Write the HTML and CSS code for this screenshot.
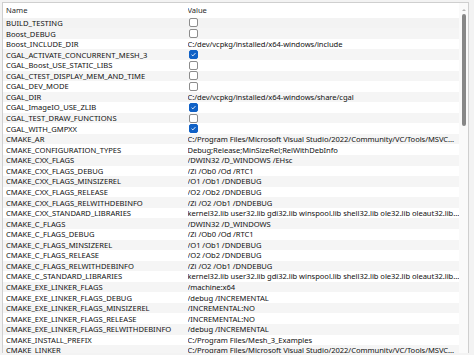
FILE: index.html
```html
<!DOCTYPE html>
<html>
<head>
<meta charset="utf-8">
<link rel="stylesheet" href="styles.css">
</head>
<body>
<div class="frame">
  <div class="table">
    <div class="head">
      <div class="c-name">Name</div>
      <div class="c-val">Value</div>
    </div>
    <div class="row hl"><div class="c-name">BUILD_TESTING</div><div class="c-val"><span class="cb"></span></div></div>
    <div class="row"><div class="c-name">Boost_DEBUG</div><div class="c-val"><span class="cb"></span></div></div>
    <div class="row"><div class="c-name">Boost_INCLUDE_DIR</div><div class="c-val">C:/dev/vcpkg/installed/x64-windows/include</div></div>
    <div class="row"><div class="c-name">CGAL_ACTIVATE_CONCURRENT_MESH_3</div><div class="c-val"><span class="cb on"><svg viewBox="0 0 8 8"><path d="M1.8 4.2 L3.3 5.6 L6.2 2.4"/></svg></span></div></div>
    <div class="row"><div class="c-name">CGAL_Boost_USE_STATIC_LIBS</div><div class="c-val"><span class="cb"></span></div></div>
    <div class="row"><div class="c-name">CGAL_CTEST_DISPLAY_MEM_AND_TIME</div><div class="c-val"><span class="cb"></span></div></div>
    <div class="row"><div class="c-name">CGAL_DEV_MODE</div><div class="c-val"><span class="cb"></span></div></div>
    <div class="row"><div class="c-name">CGAL_DIR</div><div class="c-val">C:/dev/vcpkg/installed/x64-windows/share/cgal</div></div>
    <div class="row"><div class="c-name">CGAL_ImageIO_USE_ZLIB</div><div class="c-val"><span class="cb on"><svg viewBox="0 0 8 8"><path d="M1.8 4.2 L3.3 5.6 L6.2 2.4"/></svg></span></div></div>
    <div class="row"><div class="c-name">CGAL_TEST_DRAW_FUNCTIONS</div><div class="c-val"><span class="cb"></span></div></div>
    <div class="row"><div class="c-name">CGAL_WITH_GMPXX</div><div class="c-val"><span class="cb on"><svg viewBox="0 0 8 8"><path d="M1.8 4.2 L3.3 5.6 L6.2 2.4"/></svg></span></div></div>
    <div class="row"><div class="c-name">CMAKE_AR</div><div class="c-val">C:/Program Files/Microsoft Visual Studio/2022/Community/VC/Tools/MSVC...</div></div>
    <div class="row"><div class="c-name">CMAKE_CONFIGURATION_TYPES</div><div class="c-val">Debug;Release;MinSizeRel;RelWithDebInfo</div></div>
    <div class="row"><div class="c-name">CMAKE_CXX_FLAGS</div><div class="c-val">/DWIN32 /D_WINDOWS /EHsc</div></div>
    <div class="row"><div class="c-name">CMAKE_CXX_FLAGS_DEBUG</div><div class="c-val">/Zi /Ob0 /Od /RTC1</div></div>
    <div class="row"><div class="c-name">CMAKE_CXX_FLAGS_MINSIZEREL</div><div class="c-val">/O1 /Ob1 /DNDEBUG</div></div>
    <div class="row"><div class="c-name">CMAKE_CXX_FLAGS_RELEASE</div><div class="c-val">/O2 /Ob2 /DNDEBUG</div></div>
    <div class="row"><div class="c-name">CMAKE_CXX_FLAGS_RELWITHDEBINFO</div><div class="c-val">/Zi /O2 /Ob1 /DNDEBUG</div></div>
    <div class="row"><div class="c-name">CMAKE_CXX_STANDARD_LIBRARIES</div><div class="c-val">kernel32.lib user32.lib gdi32.lib winspool.lib shell32.lib ole32.lib oleaut32.lib...</div></div>
    <div class="row"><div class="c-name">CMAKE_C_FLAGS</div><div class="c-val">/DWIN32 /D_WINDOWS</div></div>
    <div class="row"><div class="c-name">CMAKE_C_FLAGS_DEBUG</div><div class="c-val">/Zi /Ob0 /Od /RTC1</div></div>
    <div class="row"><div class="c-name">CMAKE_C_FLAGS_MINSIZEREL</div><div class="c-val">/O1 /Ob1 /DNDEBUG</div></div>
    <div class="row"><div class="c-name">CMAKE_C_FLAGS_RELEASE</div><div class="c-val">/O2 /Ob2 /DNDEBUG</div></div>
    <div class="row"><div class="c-name">CMAKE_C_FLAGS_RELWITHDEBINFO</div><div class="c-val">/Zi /O2 /Ob1 /DNDEBUG</div></div>
    <div class="row"><div class="c-name">CMAKE_C_STANDARD_LIBRARIES</div><div class="c-val">kernel32.lib user32.lib gdi32.lib winspool.lib shell32.lib ole32.lib oleaut32.lib...</div></div>
    <div class="row"><div class="c-name">CMAKE_EXE_LINKER_FLAGS</div><div class="c-val">/machine:x64</div></div>
    <div class="row"><div class="c-name">CMAKE_EXE_LINKER_FLAGS_DEBUG</div><div class="c-val">/debug /INCREMENTAL</div></div>
    <div class="row"><div class="c-name">CMAKE_EXE_LINKER_FLAGS_MINSIZEREL</div><div class="c-val">/INCREMENTAL:NO</div></div>
    <div class="row"><div class="c-name">CMAKE_EXE_LINKER_FLAGS_RELEASE</div><div class="c-val">/INCREMENTAL:NO</div></div>
    <div class="row"><div class="c-name">CMAKE_EXE_LINKER_FLAGS_RELWITHDEBINFO</div><div class="c-val">/debug /INCREMENTAL</div></div>
    <div class="row"><div class="c-name">CMAKE_INSTALL_PREFIX</div><div class="c-val">C:/Program Files/Mesh_3_Examples</div></div>
    <div class="row"><div class="c-name">CMAKE_LINKER</div><div class="c-val">C:/Program Files/Microsoft Visual Studio/2022/Community/VC/Tools/MSVC...</div></div>
  </div>
  <div class="scrollbar">
    <div class="arrow"></div>
    <div class="thumb"></div>
  </div>
</div>
</body>
</html>
```

FILE: styles.css
```css
html, body {
  margin: 0;
  padding: 0;
}
body {
  width: 474px;
  height: 355px;
  background: #f3f3f3;
  font-family: "Noto Sans", "Open Sans", sans-serif;
  font-size: 7.6px;
  color: #111111;
  overflow: hidden;
}
.frame {
  margin: 2px 5px 0 2px;
  height: 350px;
  border: 1px solid #cfcfcf;
  border-bottom: none;
  background: #ffffff;
  display: flex;
  overflow: hidden;
}
.table {
  flex: 1;
  min-width: 0;
}
.head, .row {
  display: flex;
  align-items: center;
  white-space: nowrap;
}
.head {
  height: 14.7px;
  color: #2a2a2a;
}
.row {
  height: 10.57px;
}
.row:nth-child(odd) {
  background: #f5f5f5;
}
.row.hl {
  background: #f3f3f3;
}
.c-name {
  width: 181.5px;
  padding-left: 3px;
  flex: none;
  overflow: hidden;
}
.c-val {
  flex: 1;
  min-width: 0;
  overflow: hidden;
  text-overflow: ellipsis;
  letter-spacing: -0.05px;
  display: flex;
  align-items: center;
}
.cb {
  width: 7px;
  height: 7px;
  border: 1px solid #8c8c8c;
  border-radius: 2px;
  background: #ffffff;
  display: block;
  margin-left: 1px;
}
.cb.on {
  background: #1061c6;
  border-color: #1061c6;
}
.cb svg {
  display: block;
  width: 7px;
  height: 7px;
}
.cb svg path {
  fill: none;
  stroke: #ffffff;
  stroke-width: 1;
}
.scrollbar {
  width: 9px;
  flex: none;
  background: #fafafa;
  position: relative;
}
.arrow {
  width: 0;
  height: 0;
  margin: 6px auto 0;
  border-left: 2px solid transparent;
  border-right: 2px solid transparent;
  border-bottom: 2px solid #b5b5b5;
}
.thumb {
  width: 4px;
  height: 112px;
  margin: 3px 0 0 3px;
  background: #878787;
  border-radius: 2px;
}
```
